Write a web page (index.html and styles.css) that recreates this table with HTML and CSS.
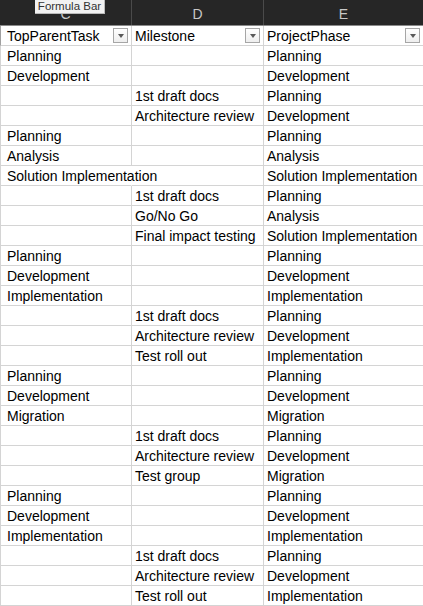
FILE: index.html
```html
<!DOCTYPE html>
<html>
<head>
<meta charset="utf-8">
<link rel="stylesheet" href="styles.css">
</head>
<body>
<div class="sheet">
  <div class="colheads">
    <div class="colhead">C</div>
    <div class="colhead">D</div>
    <div class="colhead last">E</div>
    <div class="tooltip">Formula Bar</div>
  </div>
  <div class="grid" id="grid">
    <div class="cell hdr"><span>TopParentTask</span><span class="filter"></span></div>
    <div class="cell hdr"><span>Milestone</span><span class="filter"></span></div>
    <div class="cell hdr"><span>ProjectPhase</span><span class="filter"></span></div>

    <div class="cell">Planning</div><div class="cell"></div><div class="cell">Planning</div>
    <div class="cell">Development</div><div class="cell"></div><div class="cell">Development</div>
    <div class="cell"></div><div class="cell">1st draft docs</div><div class="cell">Planning</div>
    <div class="cell"></div><div class="cell">Architecture review</div><div class="cell">Development</div>
    <div class="cell">Planning</div><div class="cell"></div><div class="cell">Planning</div>
    <div class="cell">Analysis</div><div class="cell"></div><div class="cell">Analysis</div>
    <div class="cell spill">Solution Implementation</div><div class="cell"></div><div class="cell">Solution Implementation</div>
    <div class="cell"></div><div class="cell">1st draft docs</div><div class="cell">Planning</div>
    <div class="cell"></div><div class="cell">Go/No Go</div><div class="cell">Analysis</div>
    <div class="cell"></div><div class="cell">Final impact testing</div><div class="cell">Solution Implementation</div>
    <div class="cell">Planning</div><div class="cell"></div><div class="cell">Planning</div>
    <div class="cell">Development</div><div class="cell"></div><div class="cell">Development</div>
    <div class="cell">Implementation</div><div class="cell"></div><div class="cell">Implementation</div>
    <div class="cell"></div><div class="cell">1st draft docs</div><div class="cell">Planning</div>
    <div class="cell"></div><div class="cell">Architecture review</div><div class="cell">Development</div>
    <div class="cell"></div><div class="cell">Test roll out</div><div class="cell">Implementation</div>
    <div class="cell">Planning</div><div class="cell"></div><div class="cell">Planning</div>
    <div class="cell">Development</div><div class="cell"></div><div class="cell">Development</div>
    <div class="cell">Migration</div><div class="cell"></div><div class="cell">Migration</div>
    <div class="cell"></div><div class="cell">1st draft docs</div><div class="cell">Planning</div>
    <div class="cell"></div><div class="cell">Architecture review</div><div class="cell">Development</div>
    <div class="cell"></div><div class="cell">Test group</div><div class="cell">Migration</div>
    <div class="cell">Planning</div><div class="cell"></div><div class="cell">Planning</div>
    <div class="cell">Development</div><div class="cell"></div><div class="cell">Development</div>
    <div class="cell">Implementation</div><div class="cell"></div><div class="cell">Implementation</div>
    <div class="cell"></div><div class="cell">1st draft docs</div><div class="cell">Planning</div>
    <div class="cell"></div><div class="cell">Architecture review</div><div class="cell">Development</div>
    <div class="cell"></div><div class="cell">Test roll out</div><div class="cell">Implementation</div>
  </div>
</div>
</body>
</html>
```
FILE: styles.css
```css
html, body {
  margin: 0;
  padding: 0;
  background: #ffffff;
  overflow: hidden;
}
.sheet {
  width: 423px;
  height: 606px;
  overflow: hidden;
  font-family: "Liberation Sans", Arial, sans-serif;
  font-size: 14px;
  color: #000;
}
.colheads {
  position: relative;
  display: grid;
  grid-template-columns: 132px 132px 159px;
  height: 25px;
  background: #262626;
  border-bottom: 1px solid #8a8a8a;
}
.colhead {
  color: #c8c8c8;
  font-size: 14px;
  display: flex;
  align-items: flex-end;
  justify-content: center;
  padding-bottom: 3px;
  box-sizing: border-box;
  border-right: 1px solid #4a4a4a;
}
.colhead.last {
  border-right: none;
}
.tooltip {
  position: absolute;
  left: 35px;
  top: 0;
  width: 70px;
  height: 14px;
  background: #f2f2f2;
  color: #333;
  font-size: 11.5px;
  line-height: 13px;
  text-align: center;
  border-right: 1px solid #bbb;
  border-bottom: 1px solid #bbb;
  box-sizing: border-box;
}
.grid {
  display: grid;
  grid-template-columns: 131px 132px 160px;
  grid-auto-rows: 20px;
  margin-left: 1px;
}
.cell {
  box-sizing: border-box;
  border-right: 1px solid #d4d4d4;
  border-bottom: 1px solid #d4d4d4;
  padding: 1px 3px 0 3px;
  line-height: 19px;
  white-space: nowrap;
  overflow: hidden;
  position: relative;
}
.cell:nth-child(3n+1) {
  border-left: 1px solid #d4d4d4;
  margin-left: -1px;
  padding-left: 6px;
}
.cell.spill {
  overflow: visible;
  border-right-color: transparent;
  z-index: 1;
}
.hdr {
  display: flex;
  align-items: center;
  justify-content: space-between;
  padding-right: 3px;
  padding-top: 0;
}
.hdr > span:first-child {
  padding-top: 1px;
}
.hdr:nth-child(1) {
  border-left-color: #a0a0a0;
}
.filter {
  width: 15px;
  height: 15px;
  box-sizing: border-box;
  border: 1px solid #a6a6a6;
  background: linear-gradient(#ffffff, #eeeeee);
  display: flex;
  align-items: center;
  justify-content: center;
}
.filter::after {
  content: "";
  width: 0;
  height: 0;
  border-left: 3.5px solid transparent;
  border-right: 3.5px solid transparent;
  border-top: 4px solid #595959;
}
```
